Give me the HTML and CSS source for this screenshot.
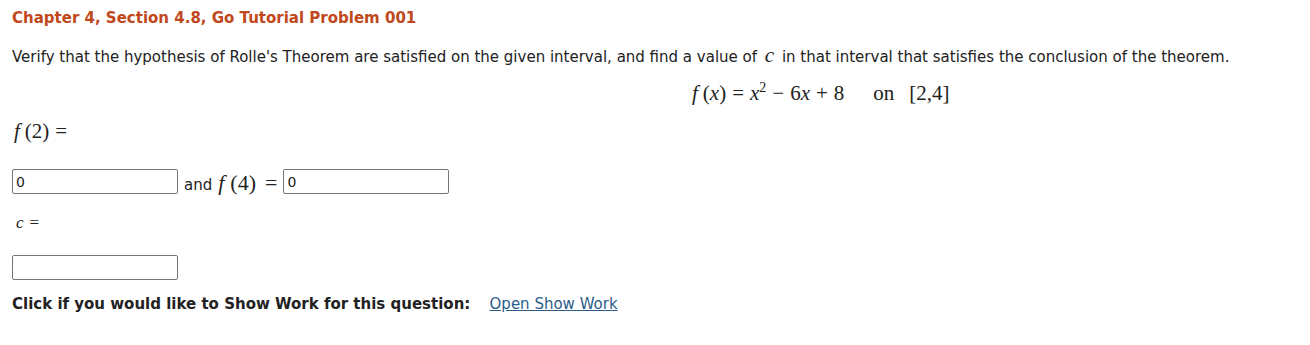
FILE: index.html
```html
<!DOCTYPE html>
<html lang="en">

<head>
    <meta charset="UTF-8">
    <title>Chapter 4, Section 4.8, Go Tutorial Problem 001</title>
    <link rel="stylesheet" href="styles.css">
</head>

<body>
    <div class="problem">
        <h1 class="title">Chapter 4, Section 4.8, Go Tutorial Problem 001</h1>

        <p class="question">Verify that the hypothesis of Rolle's Theorem are satisfied on the given interval, and find a value of <span class="math var">c</span> in that interval that satisfies the conclusion of the theorem.</p>

        <div class="formula math">
            <i>f</i><span class="fn">(<i>x</i>)</span><span class="op">=</span><i>x</i><sup>2</sup><span class="op">&minus;</span>6<i>x</i><span class="op">+</span>8<span class="gap">on</span>[2,4]
        </div>

        <div class="math label">
            <i>f</i><span class="fn">(2)</span><span class="op">=</span>
        </div>

        <div class="answer-row">
            <input type="text" class="answer" value="0">
            <span class="and">and</span>
            <span class="math inline-label"><i>f</i><span class="fn">(4)</span><span class="op">=</span></span><input type="text" class="answer" value="0">
        </div>

        <div class="math label label-c">
            <i>c</i><span class="op">=</span>
        </div>

        <div class="answer-row answer-c">
            <input type="text" class="answer" value="">
        </div>

        <p class="show-work">
            Click if you would like to Show Work for this question:
            <a href="#" class="show-link">Open Show Work</a>
        </p>
    </div>
</body>

</html>
```

FILE: styles.css
```css
body {
    margin: 0;
    font-family: Verdana, "DejaVu Sans", sans-serif;
    font-size: 15px;
    color: #222;
    background: #fff;
}

.problem {
    padding: 0 12px;
}

.title {
    margin: 0;
    padding-top: 9px;
    font-size: 15px;
    font-weight: bold;
    color: #c0481c;
}

.question {
    margin: 16px 0 0;
    line-height: 24px;
}

.math {
    font-family: "Liberation Serif", "Times New Roman", serif;
    font-size: 21px;
}

.math sup {
    font-size: 14px;
}

.fn {
    margin-left: 5px;
}

.op {
    margin: 0 6px;
}

.var {
    font-style: italic;
    margin: 0 3px;
}

.formula {
    margin-top: 7px;
    padding-left: 680px;
    line-height: 24px;
}

.gap {
    margin: 0 15px 0 29px;
}

.label {
    margin-top: 14px;
    padding-left: 2px;
    line-height: 24px;
}

.answer-row {
    margin-top: 26px;
    display: flex;
    align-items: flex-end;
}

.answer {
    width: 158px;
    height: 19px;
    padding: 2px 3px;
    border: 1px solid #767676;
    border-radius: 2px;
    font-family: Verdana, "DejaVu Sans", sans-serif;
    font-size: 14px;
    color: #222;
}

.and {
    margin: 0 6px 0 6px;
}

.inline-label {
    line-height: 22px;
    font-size: 22px;
}

.inline-label .fn {
    margin-left: 6px;
}

.inline-label .op {
    margin: 0 6px 0 9px;
}

.label-c {
    margin-top: 17px;
    padding-left: 4px;
    font-size: 17px;
}

.answer-c {
    margin-top: 20px;
}

.show-work {
    margin: 15px 0 0;
    font-weight: bold;
}

.show-link {
    margin-left: 14px;
    font-weight: normal;
    color: #2a5d8a;
}
```
